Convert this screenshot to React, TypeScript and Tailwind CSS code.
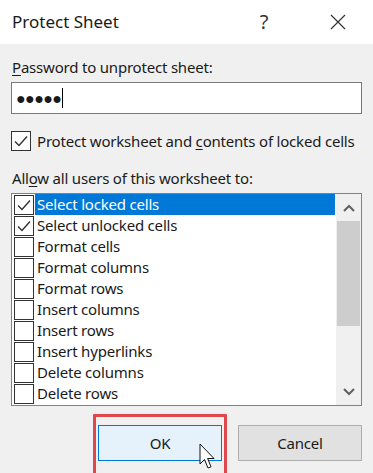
import React from 'react';

const items: { label: string; checked: boolean }[] = [
  { label: 'Select locked cells', checked: true },
  { label: 'Select unlocked cells', checked: true },
  { label: 'Format cells', checked: false },
  { label: 'Format columns', checked: false },
  { label: 'Format rows', checked: false },
  { label: 'Insert columns', checked: false },
  { label: 'Insert rows', checked: false },
  { label: 'Insert hyperlinks', checked: false },
  { label: 'Delete columns', checked: false },
  { label: 'Delete rows', checked: false },
];

const Check = () => (
  <svg width="14" height="12" viewBox="0 0 14 12" fill="none">
    <path d="M1 6.5 L5 10.5 L13 1.5" stroke="#333" strokeWidth="1.4" />
  </svg>
);

const Box: React.FC<{ checked: boolean }> = ({ checked }) => (
  <div className="w-[20px] h-[20px] border border-[#333] bg-white flex items-center justify-center shrink-0">
    {checked && <Check />}
  </div>
);

const App: React.FC = () => {
  return (
    <div
      className="w-[373px] h-[473px] bg-[#f0f0f0] text-[#1a1a1a] overflow-hidden relative"
      style={{ fontFamily: '"Noto Sans", "Open Sans", sans-serif' }}
    >
      {/* Title bar */}
      <div className="h-[44px] bg-white flex items-center pl-[12px]">
        <span className="text-[17px] flex-1">Protect Sheet</span>
        <span className="text-[20px] text-[#333] w-[20px] mr-[55px] text-center">?</span>
        <svg width="18" height="18" viewBox="0 0 18 18" className="mr-[26px]">
          <path d="M2 2 L16 16 M16 2 L2 16" stroke="#333" strokeWidth="1.2" />
        </svg>
      </div>

      <div className="px-[11px] pt-[12px] text-[15px] tracking-[-0.2px]">
        <div className="pl-[1px] leading-[22px]">
          <span className="underline underline-offset-2">P</span>assword to unprotect sheet:
        </div>
        <div className="mt-[4px] h-[32px] bg-white border border-[#7a7a7a] flex items-center pl-[4px]">
          <span className="text-[16px] tracking-[-0.6px] leading-none">●●●●●</span>
          <div className="w-[1px] h-[20px] bg-black ml-[1px]" />
        </div>

        <div className="mt-[16px] flex items-center gap-[6px]">
          <Box checked />
          <span className="leading-[22px] whitespace-nowrap">
            Protect worksheet and <span className="underline underline-offset-2">c</span>ontents of locked cells
          </span>
        </div>

        <div className="mt-[15px] pl-[1px] leading-[22px]">
          All<span className="underline underline-offset-2">o</span>w all users of this worksheet to:
        </div>

        <div className="mt-[4px] h-[213px] bg-white border border-[#828282] flex">
          <div className="flex-1 pl-[2px]">
            {items.map((it, i) => (
              <div key={it.label} className="h-[21px] flex items-center">
                <Box checked={it.checked} />
                <span
                  className={`ml-[1px] pl-[2px] h-[21px] flex items-center flex-1 whitespace-nowrap ${
                    i === 0 ? 'bg-[#0078d7] text-white' : ''
                  }`}
                >
                  {it.label}
                </span>
              </div>
            ))}
          </div>
          <div className="w-[25px] bg-[#f0f0f0] flex flex-col items-center ml-[1px]">
            <div className="h-[27px] flex items-center justify-center">
              <svg width="12" height="8" viewBox="0 0 12 8">
                <path d="M1 7 L6 2 L11 7" stroke="#606060" strokeWidth="2" fill="none" />
              </svg>
            </div>
            <div className="w-[23px] h-[105px] bg-[#cdcdcd]" />
            <div className="flex-1" />
            <div className="h-[26px] flex items-center justify-center">
              <svg width="12" height="8" viewBox="0 0 12 8">
                <path d="M1 1 L6 6 L11 1" stroke="#606060" strokeWidth="2" fill="none" />
              </svg>
            </div>
          </div>
        </div>

        <div className="mt-[8px] flex justify-end items-start pr-0">
          <div className="border-[3px] border-[#e0474c] px-[2px] pt-[8px] pb-[14px] rounded-[1px]">
            <div className="w-[124px] h-[36px] bg-[#e5f1fb] border border-[#0078d7] flex items-center justify-center">
              OK
            </div>
          </div>
          <div className="mt-[11px] ml-[11px] w-[124px] h-[36px] bg-[#e1e1e1] border border-[#adadad] flex items-center justify-center">
            Cancel
          </div>
        </div>
      </div>

      {/* mouse cursor */}
      <svg
        className="absolute left-[199px] top-[443px]"
        width="18"
        height="28"
        viewBox="0 0 18 28"
      >
        <path
          d="M1 1 L1 21 L5.5 16.5 L9 25 L12 23.8 L8.6 15.5 L15 15.5 Z"
          fill="white"
          stroke="#111"
          strokeWidth="1"
          strokeLinejoin="round"
        />
      </svg>
    </div>
  );
};

export default App;
